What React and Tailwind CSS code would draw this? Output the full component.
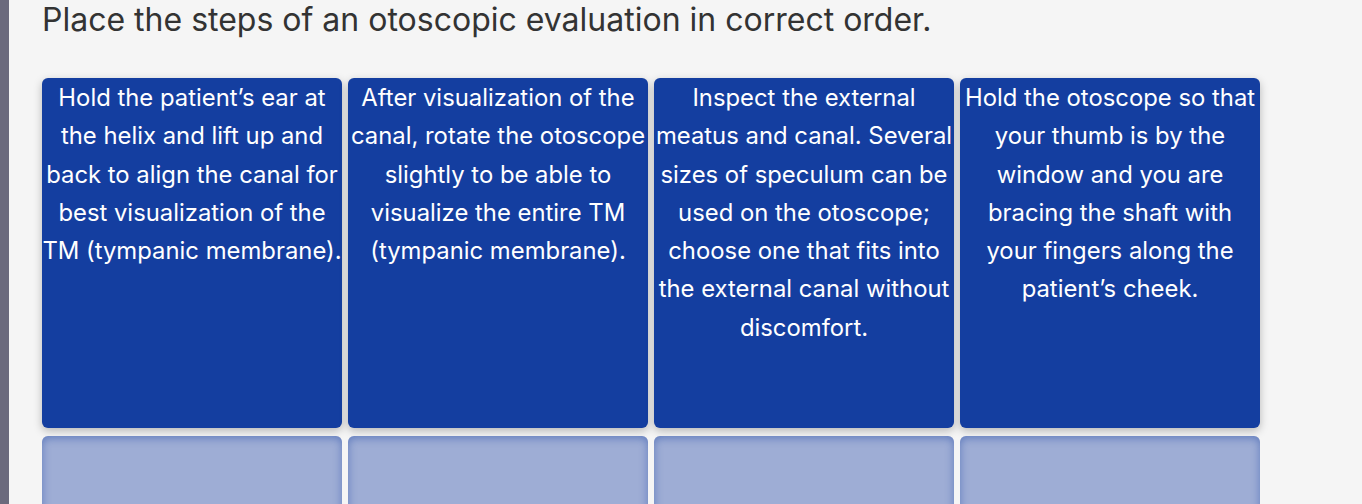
const steps = [
  "Hold the patient’s ear at the helix and lift up and back to align the canal for best visualization of the TM (tympanic membrane).",
  "After visualization of the canal, rotate the otoscope slightly to be able to visualize the entire TM (tympanic membrane).",
  "Inspect the external meatus and canal. Several sizes of speculum can be used on the otoscope; choose one that fits into the external canal without discomfort.",
  "Hold the otoscope so that your thumb is by the window and you are bracing the shaft with your fingers along the patient’s cheek.",
];

export default function App() {
  return (
    <div className="h-[504px] overflow-hidden bg-[#f5f5f5] border-l-[9px] border-[#6b6a7d] pl-[33px] font-['Inter',sans-serif]">
      <h1 className="text-[32px] leading-[40px] text-[#333333]">
        Place the steps of an otoscopic evaluation in correct order.
      </h1>
      <div className="mt-[38px] grid grid-cols-[repeat(4,300px)] gap-x-[6px] gap-y-[8px]">
        {steps.map((text, i) => (
          <div
            key={i}
            className="h-[350px] rounded-[6px] bg-[#143ea0] pt-[1px] text-center text-[23.85px] leading-[38.3px] text-white shadow-[0_3px_8px_rgba(0,0,0,0.25)]"
          >
            {text}
          </div>
        ))}
        {steps.map((_, i) => (
          <div
            key={"slot" + i}
            className="h-[120px] rounded-[6px] bg-[#9eadd5] shadow-[inset_0_2px_8px_rgba(20,62,160,0.45)]"
          />
        ))}
      </div>
    </div>
  );
}
